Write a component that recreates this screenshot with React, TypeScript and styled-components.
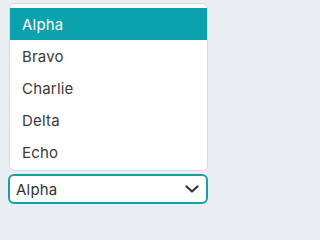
import React, {useState} from "react";
import styled, {createGlobalStyle} from "styled-components";

const GlobalStyle = createGlobalStyle`
  body {
    margin: 0;
    background: #e9eef2;
    font-family: "Inter", "Noto Sans", sans-serif;
  }
`;

const Wrapper = styled.div`
  width: 224px;
  height: 222px;
  padding: 3px 16px 0 8px;
  box-sizing: border-box;
  display: flex;
  flex-direction: column;
`;

const Menu = styled.ul`
  list-style: none;
  margin: 0 0 0 1px;
  padding: 4px 0 2px;
  background: #fff;
  border: 1px solid #d6dce1;
  border-radius: 6px;
  display: flex;
  flex-direction: column;
`;

const Option = styled.li<{ $active?: boolean }>`
  height: 32px;
  display: flex;
  align-items: center;
  padding-left: 12px;
  font-size: 15px;
  letter-spacing: 0.2px;
  color: ${p => (p.$active ? "#ffffff" : "#3a3a3a")};
  background: ${p => (p.$active ? "#0ba2ad" : "transparent")};
`;

const SelectBox = styled.div`
  margin-top: 3px;
  height: 30px;
  box-sizing: border-box;
  border: 2px solid #179fa9;
  border-radius: 6px;
  background: #fff;
  display: flex;
  align-items: center;
  justify-content: space-between;
  padding: 0 7px 0 6px;
  font-size: 15px;
  letter-spacing: 0.2px;
  color: #333;
`;

const Chevron = () => (
  <svg width="14" height="8" viewBox="0 0 14 8">
    <path d="M1.5 1.5 L7 6.5 L12.5 1.5" fill="none" stroke="#333" strokeWidth="2.2" strokeLinecap="round" strokeLinejoin="round" />
  </svg>
);

const items = ["Alpha", "Bravo", "Charlie", "Delta", "Echo"];

export default function App() {
  const [value] = useState("Alpha");
  return (
    <Wrapper>
      <GlobalStyle />
      <Menu>
        {items.map(i => (
          <Option key={i} $active={i === value}>{i}</Option>
        ))}
      </Menu>
      <SelectBox>
        <span>{value}</span>
        <Chevron />
      </SelectBox>
    </Wrapper>
  );
}
